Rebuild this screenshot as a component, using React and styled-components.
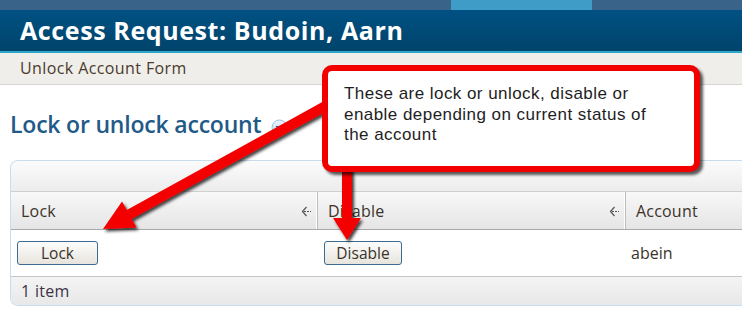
import React from "react"
import styled, { createGlobalStyle } from "styled-components"

const GlobalStyle = createGlobalStyle`
  html, body {
    margin: 0;
    padding: 0;
    background: #fff;
    overflow: hidden;
  }
  body {
    width: 742px;
    height: 312px;
    font-family: "Open Sans", "DejaVu Sans", sans-serif;
  }
`

const Page = styled.div`
  position: relative;
  width: 742px;
  height: 312px;
  overflow: hidden;
`

const TopStrip = styled.div`
  display: flex;
  height: 10px;
  background: #3a6389;
`

const StripTab = styled.div`
  margin-left: 451px;
  width: 141px;
  background: #3f9cc6;
`

const TitleBar = styled.div`
  height: 41px;
  padding-left: 20px;
  background: linear-gradient(#005183, #00446b);
  border-bottom: 2px solid #2ea7cb;
`

const Title = styled.h1`
  margin: 0;
  font-size: 25px;
  line-height: 41px;
  font-weight: 700;
  color: #fff;
  letter-spacing: 0.6px;
`

const SubBar = styled.div`
  height: 31px;
  padding-left: 20px;
  background: #f0eeeb;
  border-bottom: 1px solid #d6d4d0;
  font-size: 16px;
  letter-spacing: 0.4px;
  line-height: 31px;
  color: #4a3a2c;
`

const HeadingRow = styled.div`
  display: flex;
  align-items: center;
  gap: 10px;
  padding: 24px 0 0 10px;
  box-sizing: border-box;
  height: 54px;
  margin-bottom: 21px;
`

const Heading = styled.h2`
  margin: 0;
  font-size: 23px;
  line-height: 30px;
  font-weight: 600;
  color: #1f5a88;
  letter-spacing: -0.2px;
`

const Grid = styled.div`
  margin-left: 10px;
  width: 760px;
  border: 1px solid #c9dcee;
  border-right: none;
  border-radius: 8px 0 0 8px;
  overflow: hidden;
`

const Toolbar = styled.div`
  height: 30px;
  background: linear-gradient(#fbfbfb, #ececec);
  border-bottom: 1px solid #cfcfcf;
`

const Row = styled.div`
  display: grid;
  grid-template-columns: 307px 308px 1fr;
  height: ${p => p.$h}px;
  background: ${p => p.$bg};
  border-bottom: 1px solid ${p => p.$line};
`

const HeadCell = styled.div`
  display: flex;
  align-items: center;
  justify-content: space-between;
  padding: 1px 6px 0 10px;
  font-size: 16px;
  letter-spacing: 0.2px;
  color: #3b3329;
  border-right: 1px solid #bdbdbd;
  box-shadow: inset -1px 0 0 #fff;

  &:last-child {
    border-right: none;
    box-shadow: none;
  }
`

const Cell = styled.div`
  display: flex;
  align-items: center;
  padding-left: ${p => p.$pad || 6}px;
  font-size: 16px;
  color: #3b3329;
`

const ActionButton = styled.button`
  height: 24px;
  width: ${p => p.$w}px;
  padding: 0;
  border: 1px solid #3c6a90;
  border-radius: 3px;
  background: linear-gradient(#fdfdfc, #e7e4dd);
  font-family: "Open Sans", "DejaVu Sans", sans-serif;
  font-size: 15.5px;
  line-height: 20px;
  color: #3b3329;
`

const Footer = styled.div`
  height: 28px;
  padding-left: 10px;
  background: linear-gradient(#f4f4f4, #e8e8e8);
  font-size: 16px;
  letter-spacing: 0.3px;
  line-height: 29px;
  color: #3e3446;
`

const ArrowLayer = styled.svg`
  position: absolute;
  left: 0;
  top: 0;
  width: 742px;
  height: 312px;
  pointer-events: none;
`

const Callout = styled.div`
  position: absolute;
  left: 322px;
  top: 65px;
  width: 378px;
  height: 107px;
  box-sizing: border-box;
  padding: 13px 0 0 16px;
  background: #fff;
  border: 6px solid #f20000;
  border-radius: 10px;
  box-shadow: 3px 3px 3px rgba(0, 0, 0, 0.65);
`

const CalloutText = styled.p`
  margin: 0;
  max-width: 322px;
  font-family: "Liberation Sans", Arial, sans-serif;
  font-size: 17px;
  letter-spacing: 0.45px;
  line-height: 20.5px;
  color: #1e1e1e;
`

const ColumnMenu = () => (
  <svg width="10" height="13" viewBox="0 0 10 13">
    <path d="M5.5 2 L1.5 6.5 L5.5 11" fill="none" stroke="#555" strokeWidth="1.2" />
    <path d="M3 6.5 H10" stroke="#555" strokeWidth="1.2" strokeDasharray="2 1" />
  </svg>
)

const ExpandIcon = () => (
  <svg width="17" height="17" viewBox="0 0 17 17" style={{ marginTop: 6 }}>
    <defs>
      <linearGradient id="exp" x1="0" y1="0" x2="0" y2="1">
        <stop offset="0" stopColor="#eef5fc" />
        <stop offset="1" stopColor="#b9d3ec" />
      </linearGradient>
    </defs>
    <circle cx="8.5" cy="8.5" r="7.5" fill="url(#exp)" stroke="#9dbcdc" />
    <path d="M4.5 7 H12.5 L8.5 11.5 Z" fill="#1f5a98" />
  </svg>
)

// polygon for a thick arrow from tail to tip
function arrowPoints(x1, y1, x2, y2, half, headLen, headHalf) {
  const dx = x2 - x1
  const dy = y2 - y1
  const len = Math.hypot(dx, dy)
  const ux = dx / len
  const uy = dy / len
  const nx = -uy
  const ny = ux
  const bx = x2 - ux * headLen
  const by = y2 - uy * headLen
  const pts = [
    [x1 + nx * half, y1 + ny * half],
    [bx + nx * half, by + ny * half],
    [bx + nx * headHalf, by + ny * headHalf],
    [x2, y2],
    [bx - nx * headHalf, by - ny * headHalf],
    [bx - nx * half, by - ny * half],
    [x1 - nx * half, y1 - ny * half],
  ]
  return pts.map(p => p.map(v => v.toFixed(1)).join(",")).join(" ")
}

const App = () => (
  <Page>
    <GlobalStyle />
    <TopStrip>
      <StripTab />
    </TopStrip>
    <TitleBar>
      <Title>Access Request: Budoin, Aarn</Title>
    </TitleBar>
    <SubBar>Unlock Account Form</SubBar>
    <HeadingRow>
      <Heading>Lock or unlock account</Heading>
      <ExpandIcon />
    </HeadingRow>
    <Grid>
      <Toolbar />
      <Row $h={37} $bg="linear-gradient(#f8f8f8, #e5e5e5)" $line="#a9a9a9">
        <HeadCell>
          Lock <ColumnMenu />
        </HeadCell>
        <HeadCell>
          Disable <ColumnMenu />
        </HeadCell>
        <HeadCell>Account</HeadCell>
      </Row>
      <Row $h={46} $bg="#fff" $line="#c6c6c6">
        <Cell>
          <ActionButton $w={81}>Lock</ActionButton>
        </Cell>
        <Cell>
          <ActionButton $w={78}>Disable</ActionButton>
        </Cell>
        <Cell $pad={5}>abein</Cell>
      </Row>
      <Footer>1 item</Footer>
    </Grid>

    <ArrowLayer viewBox="0 0 742 312">
      <defs>
        <filter id="shadow" x="-10%" y="-10%" width="130%" height="130%">
          <feDropShadow dx="2" dy="2.5" stdDeviation="1.5" floodColor="#000" floodOpacity="0.75" />
        </filter>
      </defs>
      <g fill="#f40000" filter="url(#shadow)">
        <polygon points={arrowPoints(340, 98, 103, 229, 5, 30, 15)} />
        <polygon points={arrowPoints(347, 160, 347, 240, 5, 22, 14)} />
      </g>
    </ArrowLayer>

    <Callout>
      <CalloutText>
        These are lock or unlock, disable or enable depending on current status of the account
      </CalloutText>
    </Callout>
  </Page>
)

export default App
